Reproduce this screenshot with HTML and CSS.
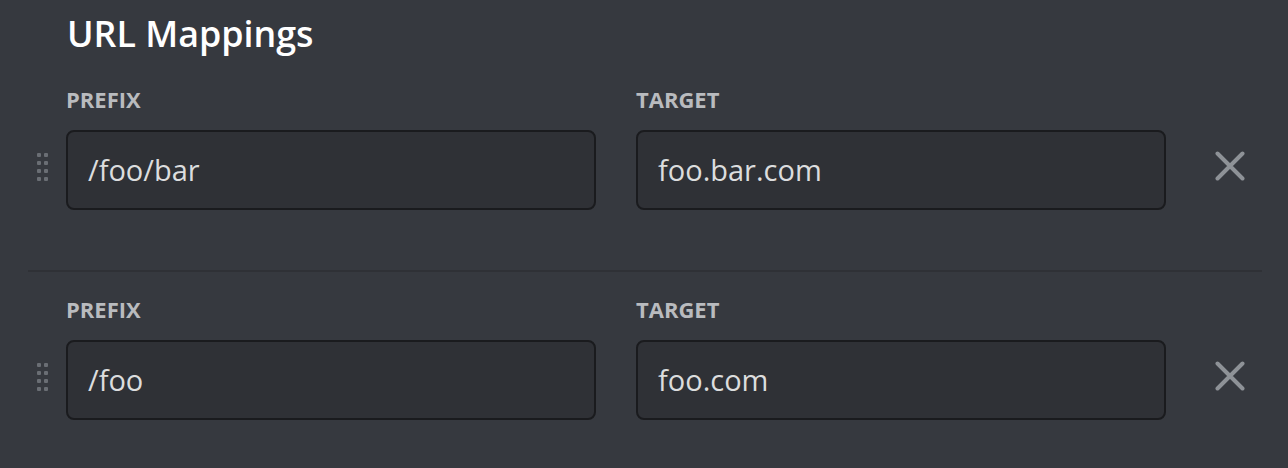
FILE: index.html
```html
<!DOCTYPE html>
<html>
<head>
<meta charset="utf-8">
<link rel="stylesheet" href="styles.css">
</head>
<body>
<div class="page">
  <h2 class="title">URL Mappings</h2>
  <div class="mapping">
    <div class="handle" aria-hidden="true">
      <span></span><span></span><span></span><span></span><span></span><span></span><span></span><span></span>
    </div>
    <div class="field">
      <div class="label">Prefix</div>
      <div class="input">/foo/bar</div>
    </div>
    <div class="field">
      <div class="label">Target</div>
      <div class="input">foo.bar.com</div>
    </div>
    <div class="remove">
      <svg width="30" height="30" viewBox="0 0 30 30"><path d="M2.5 2.5 L27.5 27.5 M27.5 2.5 L2.5 27.5" stroke="#8e9297" stroke-width="4" stroke-linecap="round" fill="none"/></svg>
    </div>
  </div>
  <div class="mapping last">
    <div class="handle" aria-hidden="true">
      <span></span><span></span><span></span><span></span><span></span><span></span><span></span><span></span>
    </div>
    <div class="field">
      <div class="label">Prefix</div>
      <div class="input">/foo</div>
    </div>
    <div class="field">
      <div class="label">Target</div>
      <div class="input">foo.com</div>
    </div>
    <div class="remove">
      <svg width="30" height="30" viewBox="0 0 30 30"><path d="M2.5 2.5 L27.5 27.5 M27.5 2.5 L2.5 27.5" stroke="#8e9297" stroke-width="4" stroke-linecap="round" fill="none"/></svg>
    </div>
  </div>
</div>
</body>
</html>
```
FILE: styles.css
```css
html, body {
  margin: 0;
  padding: 0;
  background: #36393f;
  height: 100%;
}
body {
  font-family: "Open Sans", "Noto Sans", sans-serif;
}
.page {
  padding-left: 28px;
  width: 1234px;
}
.title {
  margin: 0;
  padding: 13px 0 0 39px;
  font-size: 35.8px;
  line-height: 40px;
  font-weight: 600;
  color: #ffffff;
}
.mapping {
  display: flex;
  align-items: flex-end;
  padding: 34px 0 60px 0;
  border-bottom: 2px solid #2f3136;
}
.mapping.last {
  padding-top: 25px;
  border-bottom: none;
}
.handle {
  width: 38px;
  box-sizing: border-box;
  padding: 0 0 0 9px;
  display: grid;
  grid-template-columns: 4px 4px;
  grid-auto-rows: 4px;
  column-gap: 3px;
  row-gap: 4px;
  align-self: flex-end;
  margin-bottom: 29px;
}
.handle span {
  width: 4px;
  height: 4px;
  border-radius: 1px;
  background: #6a6e74;
}
.field {
  width: 530px;
  margin-right: 40px;
}
.field + .field {
  margin-right: 0;
}
.label {
  font-size: 22px;
  line-height: 24px;
  font-weight: 700;
  text-transform: uppercase;
  color: #b9bbbe;
  margin-bottom: 19px;
}
.input {
  box-sizing: border-box;
  height: 80px;
  border: 2px solid #1a1b1e;
  border-radius: 8px;
  background: #2f3136;
  color: #dcddde;
  font-size: 29px;
  line-height: 76px;
  padding: 0 20px;
}
.remove {
  flex: 1;
  display: flex;
  justify-content: flex-end;
  padding-right: 17px;
  padding-bottom: 8px;
  box-sizing: border-box;
  height: 80px;
  align-items: center;
}
.remove svg {
  display: block;
}
```
